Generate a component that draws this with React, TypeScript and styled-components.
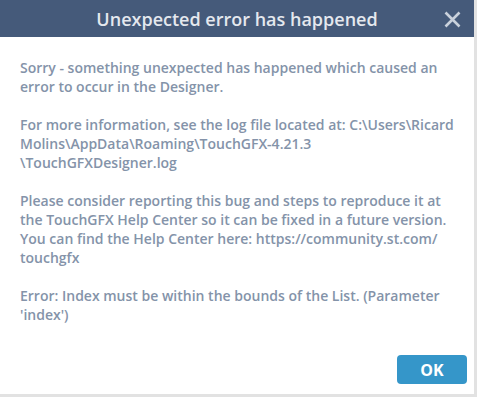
import styled, { createGlobalStyle } from "styled-components";

const GlobalStyle = createGlobalStyle`
  html, body {
    margin: 0;
    padding: 0;
    background: #ffffff;
  }
  body {
    font-family: "Open Sans", "Liberation Sans", sans-serif;
  }
`;

const Frame = styled.div`
  width: 477px;
  height: 397px;
  background: #e2e2e2;
`;

const Dialog = styled.div`
  width: 474px;
  height: 394px;
  background: #ffffff;
  display: flex;
  flex-direction: column;
`;

const Header = styled.div`
  height: 37px;
  background: #455a7a;
  display: flex;
  align-items: center;
  justify-content: center;
  position: relative;
`;

const Title = styled.h1`
  margin: 0;
  font-size: 18px;
  font-weight: 600;
  color: #e4e8ee;
`;

const CloseButton = styled.button`
  position: absolute;
  right: 13px;
  top: 10px;
  width: 18px;
  height: 18px;
  padding: 0;
  border: none;
  background: none;
  display: flex;
  align-items: center;
  justify-content: center;
`;

const Body = styled.div`
  flex: 1;
  padding: 21px 16px 0 20px;
  display: flex;
  flex-direction: column;
  gap: 19px;
`;

const Paragraph = styled.p`
  margin: 0;
  font-size: 14px;
  font-weight: 600;
  line-height: 19px;
  color: #8493a9;
`;

const Footer = styled.div`
  display: flex;
  justify-content: flex-end;
  padding: 0 7px 10px 0;
`;

const OkButton = styled.button`
  width: 70px;
  height: 29px;
  border: none;
  border-radius: 4px;
  background: #3596c9;
  color: #ffffff;
  font-family: "Open Sans", "Liberation Sans", sans-serif;
  font-size: 16px;
  font-weight: 700;
`;

const paragraphs = [
  "Sorry - something unexpected has happened which caused an error to occur in the Designer.",
  "For more information, see the log file located at: C:\\Users\\Ricard Molins\\AppData\\Roaming\\TouchGFX-4.21.3 \\TouchGFXDesigner.log",
  "Please consider reporting this bug and steps to reproduce it at the TouchGFX Help Center so it can be fixed in a future version. You can find the Help Center here: https://community.st.com/ touchgfx",
  "Error: Index must be within the bounds of the List. (Parameter 'index')",
];

export default function App() {
  return (
    <Frame>
      <GlobalStyle />
      <Dialog>
        <Header>
          <Title>Unexpected error has happened</Title>
          <CloseButton aria-label="Close">
            <svg width="17" height="17" viewBox="0 0 17 17">
              <path
                d="M1.5 1.5 L15.5 15.5 M15.5 1.5 L1.5 15.5"
                stroke="#c9d1dc"
                strokeWidth="2.6"
              />
            </svg>
          </CloseButton>
        </Header>
        <Body>
          {paragraphs.map((text, index) => (
            <Paragraph key={index}>{text}</Paragraph>
          ))}
        </Body>
        <Footer>
          <OkButton>OK</OkButton>
        </Footer>
      </Dialog>
    </Frame>
  );
}
